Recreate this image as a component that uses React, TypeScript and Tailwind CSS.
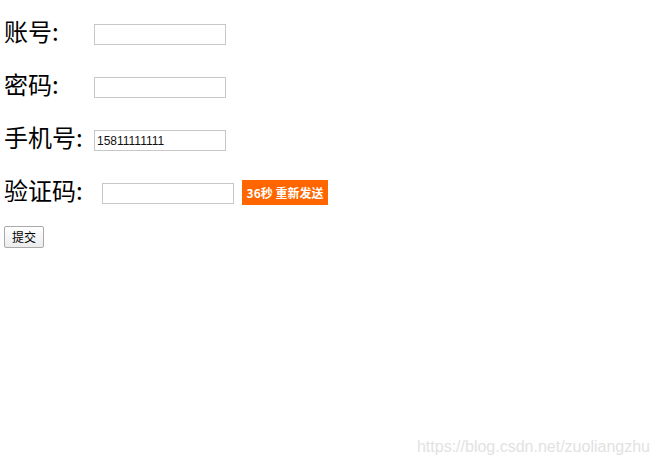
// App.tsx — 手机验证码注册表单
const CJK = "font-['Noto_Sans_CJK_SC','Liberation_Sans',sans-serif]";

function Field({ label, value }: { label: string; value?: string }) {
  return (
    <div className="flex h-[43px] items-center">
      <span className={`mb-[8px] w-[90px] shrink-0 text-[24px] leading-none text-black ${CJK}`}>{label}</span>
      <input
        type="text"
        defaultValue={value}
        className="h-[21px] w-[132px] border border-[#c8c8c8] bg-white px-[2px] text-[12px] text-[#111] outline-none font-['Liberation_Sans',sans-serif]"
      />
    </div>
  );
}

export default function App() {
  return (
    <div className="relative h-[467px] w-[658px] overflow-hidden bg-white">
      <div className="flex flex-col gap-[10px] pl-1 pt-[13px]">
        <Field label="账号:" />
        <Field label="密码:" />
        <Field label="手机号:" value="15811111111" />
        <div className="flex h-[43px] items-center">
          <span className={`mb-[8px] w-[98px] shrink-0 text-[24px] leading-none text-black ${CJK}`}>验证码:</span>
          <input
            type="text"
            className="h-[21px] w-[132px] border border-[#c8c8c8] bg-white px-[2px] text-[12px] outline-none"
          />
          <button
            type="button"
            className={`ml-[8px] mt-[-2px] h-[25px] w-[86px] bg-[#ff6600] text-[12px] font-bold text-white ${CJK}`}
          >
            36秒 重新发送
          </button>
        </div>
      </div>
      <button
        type="button"
        className={`ml-1 mt-[11px] h-[22px] w-[40px] rounded-[2px] border border-[#a9a9a9] bg-gradient-to-b from-white to-[#ececec] text-[12px] text-black ${CJK}`}
      >
        提交
      </button>
      {/* 水印 */}
      <span className="absolute bottom-[8px] right-[8px] text-[16px] text-[#e2e2e2] font-['Liberation_Sans',sans-serif]">
        https://blog.csdn.net/zuoliangzhu
      </span>
    </div>
  );
}
